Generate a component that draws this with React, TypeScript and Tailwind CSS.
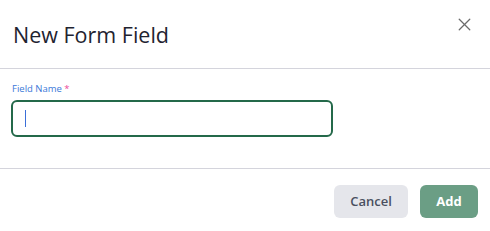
import React from 'react';
import { X } from 'lucide-react';

export default function App() {
  return (
    <div className="w-[490px] h-[231px] bg-white flex flex-col font-['Open_Sans',sans-serif]">
      <div className="h-[69px] flex items-start justify-between pl-[13px] pr-[15px] border-b border-[#d4d4dc]">
        <h2 className="mt-[21px] text-[21.5px] leading-[28px] text-[#1f2330]">New Form Field</h2>
        <button className="mt-[14px] text-[#6b6b6b]">
          <X size={21} strokeWidth={1.5} />
        </button>
      </div>
      <div className="h-[100px] px-[11px] pt-[13px] border-b border-[#d4d4dc]">
        <label className="block pl-[1px] text-[9.5px] leading-[13px] text-[#3b78d8]">
          Field Name <span className="text-[#ec4899]">*</span>
        </label>
        <div className="mt-[5px] w-[322px] h-[37px] rounded-[6px] border-2 border-[#24694a] flex items-center pl-[12px]">
          <span className="w-px h-[17px] bg-[#3b6fd8]" />
        </div>
      </div>
      <div className="flex justify-end gap-[12px] pt-[16px] pr-[12px]">
        <button className="w-[74px] h-[33px] rounded-[6px] bg-[#e5e6eb] text-[13px] font-semibold text-[#4a5060]">
          Cancel
        </button>
        <button className="w-[58px] h-[33px] rounded-[6px] bg-[#6b9e85] text-[13px] font-bold text-white">
          Add
        </button>
      </div>
    </div>
  );
}
